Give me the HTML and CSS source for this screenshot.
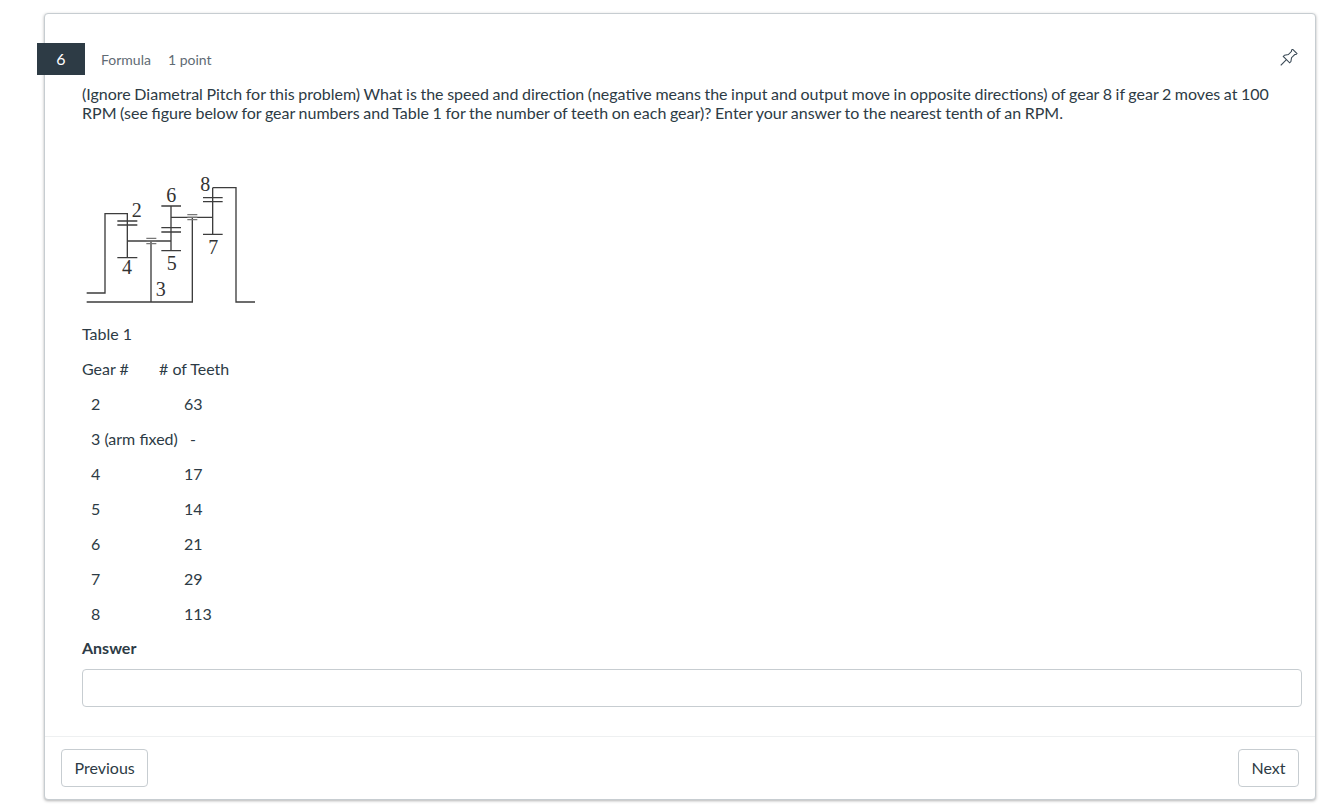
FILE: index.html
```html
<!DOCTYPE html>
<html lang="en">
<head>
    <meta charset="UTF-8">
    <meta name="viewport" content="width=device-width, initial-scale=1.0">
    <title>Formula Question</title>
    <link rel="stylesheet" href="styles.css">
</head>
<body>
    <div class="card">
        <div class="question-head">
            <div class="number">6</div>
            <span class="meta">Formula</span>
            <span class="meta">1 point</span>
            <svg class="pin" viewBox="0 0 20 20" width="18" height="18" fill="none" stroke="#3b4a56" stroke-width="1.2">
                <g transform="rotate(45 10 9)">
                    <path d="M10 13 V22"/>
                    <path d="M6.5 0 H13.5 V1.5 L12.5 2.5 V7.5 L15 11 V13 H5 V11 L7.5 7.5 V2.5 L6.5 1.5 Z"/>
                </g>
            </svg>
        </div>

        <div class="question-body">
            <p class="prompt">(Ignore Diametral Pitch for this problem) What is the speed and direction (negative means the input and output move in opposite directions) of gear 8 if gear 2 moves at 100 RPM (see figure below for gear numbers and Table 1 for the number of teeth on each gear)? Enter your answer to the nearest tenth of an RPM.</p>

            <svg class="figure" viewBox="36 0 540 450" width="180" height="150">
                <g fill="none" stroke="#3d3d3d" stroke-width="4">
                    <path d="M50 384 H105 V146 H172 V278"/>
                    <path d="M142 168 H202 M142 180 H202 M142 278 H202"/>
                    <path d="M172 228 H303"/>
                    <path d="M243 228 V411 M50 411 H367 V157"/>
                    <path d="M303 123 V257"/>
                    <path d="M274 123 H333 M274 188 H333 M274 201 H333 M274 257 H333"/>
                    <path d="M303 157 H428"/>
                    <path d="M428 68 V208"/>
                    <path d="M399 98 H458 M399 110 H458 M399 208 H458"/>
                    <path d="M428 68 H498 V411 H555"/>
                </g>
                <g fill="none" stroke="#777" stroke-width="4">
                    <path d="M229 220 H259 M229 228 H259 M229 236 H259"/>
                    <path d="M352 149 H382 M352 157 H382 M352 164 H382"/>
                </g>
                <g class="figure-label" text-anchor="middle">
                    <text x="200" y="156">2</text>
                    <text x="171" y="328">4</text>
                    <text x="304" y="112">6</text>
                    <text x="305" y="316">5</text>
                    <text x="272" y="392">3</text>
                    <text x="406" y="78">8</text>
                    <text x="430" y="267">7</text>
                </g>
            </svg>

            <p class="line">Table 1</p>
            <div class="teeth-table">
                <div>Gear #</div><div># of Teeth</div>
                <div class="gear">2</div><div class="teeth">63</div>
                <div class="gear">3 (arm fixed)</div><div class="teeth dash">-</div>
                <div class="gear">4</div><div class="teeth">17</div>
                <div class="gear">5</div><div class="teeth">14</div>
                <div class="gear">6</div><div class="teeth">21</div>
                <div class="gear">7</div><div class="teeth">29</div>
                <div class="gear">8</div><div class="teeth">113</div>
            </div>

            <label class="answer-label" for="answer">Answer</label>
            <input class="answer" id="answer" type="text">
        </div>

        <div class="footer">
            <button>Previous</button>
            <button>Next</button>
        </div>
    </div>
</body>
</html>
```

FILE: styles.css
```css
body {
    font-family: Lato, 'Open Sans', sans-serif;
    font-size: 16px;
    color: #2d3b45;
    background-color: #fff;
    margin: 0;
    padding: 13px 25px 5px 44px;
    height: 805px;
    box-sizing: border-box;
    overflow: hidden;
}

.card {
    background-color: #fff;
    border: 1px solid #c7cdd1;
    border-radius: 4px;
    box-shadow: 0 1px 3px rgba(0, 0, 0, 0.3);
    height: 787px;
    box-sizing: border-box;
    display: flex;
    flex-direction: column;
}

.question-head {
    display: flex;
    align-items: center;
    height: 32px;
    margin: 29px 17px 0 -8px;
}

.number {
    width: 48px;
    height: 32px;
    line-height: 32px;
    text-align: center;
    background-color: #2d3b45;
    color: #fff;
    margin-right: 16px;
    flex-shrink: 0;
}

.meta {
    font-size: 14px;
    color: #5f6b74;
    margin-right: 16px;
}

.meta + .meta {
    margin-left: 1px;
}

.pin {
    margin-left: auto;
    margin-top: -2px;
}

.question-body {
    padding: 0 13px 0 37px;
    flex: 1;
}

.prompt {
    margin: 9px 0 0;
    line-height: 19px;
    word-spacing: -0.5px;
}

.figure {
    display: block;
    margin-top: 43px;
}

.line {
    margin: 9px 0 0;
    line-height: 19px;
}

.figure-label {
    font-family: 'Liberation Serif', serif;
    font-size: 60px;
    fill: #333;
}

.teeth-table {
    display: grid;
    grid-template-columns: 77px auto;
    grid-auto-rows: 35px;
    align-items: center;
    margin-top: 8px;
}

.gear {
    padding-left: 9px;
    white-space: nowrap;
}

.teeth {
    padding-left: 25px;
}

.dash {
    padding-left: 31px;
}

.answer-label {
    display: block;
    font-weight: 700;
    line-height: 19px;
    margin-top: 7px;
}

.answer {
    display: block;
    width: 100%;
    height: 38px;
    box-sizing: border-box;
    margin-top: 12px;
    border: 1px solid #c7cdd1;
    border-radius: 4px;
    background-color: #fff;
}

.footer {
    display: flex;
    justify-content: space-between;
    align-items: center;
    border-top: 1px solid #eef0f1;
    height: 63px;
    box-sizing: border-box;
    padding: 0 16px;
}

.footer button {
    font-family: inherit;
    font-size: 16px;
    color: #2d3b45;
    background-color: #fff;
    border: 1px solid #c7cdd1;
    border-radius: 4px;
    height: 38px;
    padding: 0 12.5px 2px;
}
```
